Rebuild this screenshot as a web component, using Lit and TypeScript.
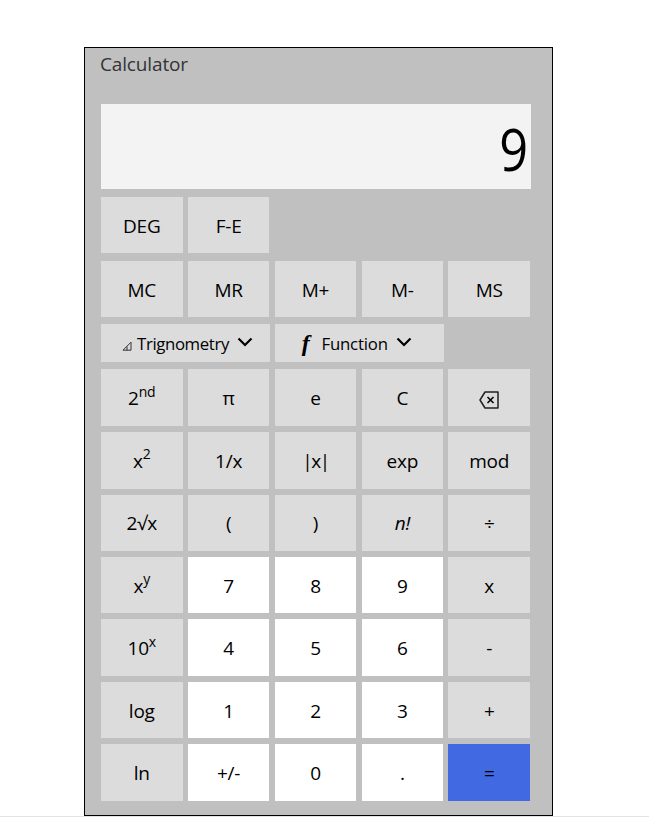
import { LitElement, html, css } from "lit";
import { customElement } from "lit/decorators.js";

const chevron = html`<svg class="chev" viewBox="0 0 16 10" width="16" height="10"><path d="M1.500 1.500 8 8l6.500-6.500" fill="none" stroke="#000" stroke-width="2.200"/></svg>`;
const tri = html`<svg class="tri" viewBox="0 0 10 10" width="10" height="10"><path d="M1 9.200 9 1.200v8z M5 5.500v3.700" fill="none" stroke="#333" stroke-width="1"/></svg>`;
const back = html`<svg class="back" viewBox="0 0 20 18" width="20" height="18"><path d="M6 1h13v16H6L1 9z" fill="none" stroke="#222" stroke-width="1.500" stroke-linejoin="round"/><path d="m8.500 6 6 6m0-6-6 6" stroke="#000" stroke-width="1.500" fill="none"/></svg>`;

@customElement("app-root")
export class AppRoot extends LitElement {
  static styles = css`
    :host {
      display: block;
      height: 816px;
      border-bottom: 1px solid #e3e3e3;
      background: #fff;
      font-family: "Open Sans", "Noto Sans", sans-serif;
      color: #000;
    }
    .pad { padding: 47px 0 0 84px; }
    .calc {
      box-sizing: border-box;
      width: 469px;
      height: 769px;
      border: 1px solid #000;
      background: #c0c0c0;
      padding: 0 22px 0 16px;
    }
    .title {
      height: 56px;
      font-size: 19px;
      line-height: 33px;
      color: #333;
      letter-spacing: -0.15px;
      text-indent: -1px;
    }
    .display {
      height: 85px;
      margin-right: -1px;
      background: #f3f3f3;
      font-weight: 400;
      font-size: 58px;
      line-height: 90px;
      text-align: right;
      padding-right: 3px;
      overflow: hidden;
    }
    .display span {
      display: inline-block;
      transform: scaleX(0.87);
      transform-origin: right center;
    }
    .row {
      display: grid;
      grid-template-columns: repeat(5, 1fr);
      column-gap: 5.350px;
    }
    .top { margin-top: 8px; }
    .mem { margin-top: 8px; }
    .drop { margin-top: 7px; }
    .keys {
      margin-top: 7px;
      row-gap: 6px;
      grid-template-rows: 57px 56.500px 56.500px 56px 57px 56px 57px;
    }
    .top, .mem { grid-auto-rows: 56px; }
    .drop { grid-auto-rows: 38px; }
    button {
      all: unset;
      display: flex;
      align-items: center;
      justify-content: center;
      background: #dcdcdc;
      font: inherit;
      font-size: 19px;
      color: #000;
      letter-spacing: -0.2px;
      padding-top: 1px;
      box-sizing: border-box;
    }
    button.num { background: #fff; }
    button.eq { background: #4169e1; }
    button i { font-style: italic; }
    .bars { letter-spacing: -1.500px; }
    .back { margin-top: 3px; }
    sup { font-size: 14px; line-height: 0; position: relative; top: -1px; vertical-align: super; }
    .dd { grid-column: span 2; font-size: 16.800px; padding-top: 0; gap: 5px; margin-right: -0.600px; }
    .dd.trig { padding-left: 4px; letter-spacing: -0.38px; }
    .dd.fn { padding-right: 5px; }
    .dd .tri { margin: 5px 0 0 0; }
    .dd .chev { margin: 0 0 2px 3px; }
    .dd b { font-family: "Liberation Serif", serif; font-style: italic; font-weight: 700; font-size: 24px; margin-right: 7px; }
  `;

  render() {
    const k = (t: unknown, c = "") => html`<button class=${c}>${t}</button>`;
    return html`<div class="pad"><div class="calc">
      <div class="title">Calculator</div>
      <div class="display"><span>9</span></div>
      <div class="row top">${k("DEG")}${k("F-E")}</div>
      <div class="row mem">${k("MC")}${k("MR")}${k("M+")}${k("M-")}${k("MS")}</div>
      <div class="row drop">
        <button class="dd trig">${tri}<span>Trignometry</span>${chevron}</button>
        <button class="dd fn"><b>f</b><span>Function</span>${chevron}</button>
      </div>
      <div class="row keys">
        ${k(html`<span>2<sup>nd</sup></span>`)}${k("π")}${k("e")}${k("C")}${k(back)}
        ${k(html`<span>x<sup>2</sup></span>`)}${k("1/x")}${k("|x|", "bars")}${k("exp")}${k("mod")}
        ${k("2√x")}${k("(")}${k(")")}${k(html`<i>n!</i>`)}${k("÷")}
        ${k(html`<span>x<sup>y</sup></span>`)}${k("7", "num")}${k("8", "num")}${k("9", "num")}${k("x")}
        ${k(html`<span>10<sup>x</sup></span>`)}${k("4", "num")}${k("5", "num")}${k("6", "num")}${k("-")}
        ${k("log")}${k("1", "num")}${k("2", "num")}${k("3", "num")}${k("+")}
        ${k("ln")}${k("+/-", "num")}${k("0", "num")}${k(".", "num")}${k("=", "eq")}
      </div>
    </div></div>`;
  }
}
